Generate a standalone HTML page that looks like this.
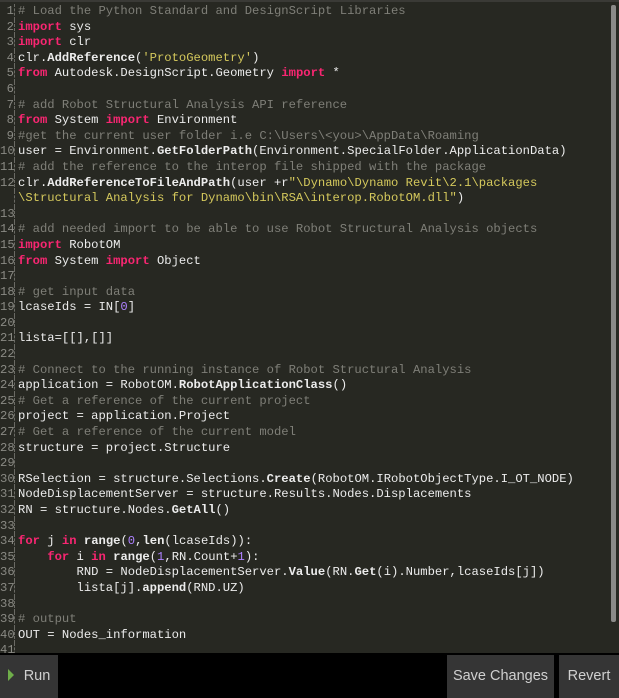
<!DOCTYPE html>
<html><head><meta charset="utf-8"><style>
html,body{margin:0;padding:0;background:#000;width:619px;height:698px;overflow:hidden}
#ed{position:absolute;left:0;top:0;width:619px;height:653px;background:#272822;border-top:2px solid #3a3a36;box-sizing:border-box;overflow:hidden}
#code{position:absolute;left:0;top:2px;font-family:"Liberation Mono",monospace;font-size:12.2px;line-height:15.6px;color:#ececec}
.r{height:15.6px;white-space:pre}
.n{display:inline-block;width:14px;text-align:right;color:#8a8a84;border-right:1px dashed #6a6a64;margin-right:3px;padding-right:0}
.c{color:#7f7f78}
.k{color:#f92672;font-weight:bold}
.s{color:#d4c85c}
.b{font-weight:bold}
.m{color:#ae81ff}
#sb{position:absolute;left:611px;top:3px;width:5px;height:617px;background:#8a8a88;border-radius:2px}
.btn{position:absolute;top:655px;height:43px;background:#353535;color:#d0d0d0;font-family:"Liberation Sans",sans-serif;font-size:14.5px;line-height:43px;text-align:center}
</style></head><body>
<div id="ed"><div id="code">
<div class="r"><span class="n">1</span><span class="c"># Load the Python Standard and DesignScript Libraries</span></div>
<div class="r"><span class="n">2</span><span class="k">import</span> sys</div>
<div class="r"><span class="n">3</span><span class="k">import</span> clr</div>
<div class="r"><span class="n">4</span>clr.<span class="b">AddReference</span>(<span class="s">'ProtoGeometry'</span>)</div>
<div class="r"><span class="n">5</span><span class="k">from</span> Autodesk.DesignScript.Geometry <span class="k">import</span> *</div>
<div class="r"><span class="n">6</span></div>
<div class="r"><span class="n">7</span><span class="c"># add Robot Structural Analysis API reference</span></div>
<div class="r"><span class="n">8</span><span class="k">from</span> System <span class="k">import</span> Environment</div>
<div class="r"><span class="n">9</span><span class="c">#get the current user folder i.e C:\Users\&lt;you&gt;\AppData\Roaming</span></div>
<div class="r"><span class="n">10</span>user = Environment.<span class="b">GetFolderPath</span>(Environment.SpecialFolder.ApplicationData)</div>
<div class="r"><span class="n">11</span><span class="c"># add the reference to the interop file shipped with the package</span></div>
<div class="r"><span class="n">12</span>clr.<span class="b">AddReferenceToFileAndPath</span>(user +r<span class="s">"\Dynamo\Dynamo Revit\2.1\packages</span></div>
<div class="r"><span class="n"> </span><span class="s">\Structural Analysis for Dynamo\bin\RSA\interop.RobotOM.dll"</span>)</div>
<div class="r"><span class="n">13</span></div>
<div class="r"><span class="n">14</span><span class="c"># add needed import to be able to use Robot Structural Analysis objects</span></div>
<div class="r"><span class="n">15</span><span class="k">import</span> RobotOM</div>
<div class="r"><span class="n">16</span><span class="k">from</span> System <span class="k">import</span> Object</div>
<div class="r"><span class="n">17</span></div>
<div class="r"><span class="n">18</span><span class="c"># get input data</span></div>
<div class="r"><span class="n">19</span>lcaseIds = IN[<span class="m">0</span>]</div>
<div class="r"><span class="n">20</span></div>
<div class="r"><span class="n">21</span>lista=[[],[]]</div>
<div class="r"><span class="n">22</span></div>
<div class="r"><span class="n">23</span><span class="c"># Connect to the running instance of Robot Structural Analysis</span></div>
<div class="r"><span class="n">24</span>application = RobotOM.<span class="b">RobotApplicationClass</span>()</div>
<div class="r"><span class="n">25</span><span class="c"># Get a reference of the current project</span></div>
<div class="r"><span class="n">26</span>project = application.Project</div>
<div class="r"><span class="n">27</span><span class="c"># Get a reference of the current model</span></div>
<div class="r"><span class="n">28</span>structure = project.Structure</div>
<div class="r"><span class="n">29</span></div>
<div class="r"><span class="n">30</span>RSelection = structure.Selections.<span class="b">Create</span>(RobotOM.IRobotObjectType.I_OT_NODE)</div>
<div class="r"><span class="n">31</span>NodeDisplacementServer = structure.Results.Nodes.Displacements</div>
<div class="r"><span class="n">32</span>RN = structure.Nodes.<span class="b">GetAll</span>()</div>
<div class="r"><span class="n">33</span></div>
<div class="r"><span class="n">34</span><span class="k">for</span> j <span class="k">in</span> <span class="b">range</span>(<span class="m">0</span>,<span class="b">len</span>(lcaseIds)):</div>
<div class="r"><span class="n">35</span>    <span class="k">for</span> i <span class="k">in</span> <span class="b">range</span>(<span class="m">1</span>,RN.Count+<span class="m">1</span>):</div>
<div class="r"><span class="n">36</span>        RND = NodeDisplacementServer.<span class="b">Value</span>(RN.<span class="b">Get</span>(i).Number,lcaseIds[j])</div>
<div class="r"><span class="n">37</span>        lista[j].<span class="b">append</span>(RND.UZ)</div>
<div class="r"><span class="n">38</span></div>
<div class="r"><span class="n">39</span><span class="c"># output</span></div>
<div class="r"><span class="n">40</span>OUT = Nodes_information</div>
<div class="r"><span class="n">41</span></div>
</div><div id="sb"></div></div>
<div class="btn" style="left:0;width:58px"><span style="display:inline-block;width:0;height:0;border-left:6px solid #6fae4a;border-top:6px solid transparent;border-bottom:6px solid transparent;margin-right:10px;vertical-align:-1px"></span>Run</div>
<div class="btn" style="left:447px;width:107px">Save Changes</div>
<div class="btn" style="left:559px;width:60px">Revert</div>
</body></html>
